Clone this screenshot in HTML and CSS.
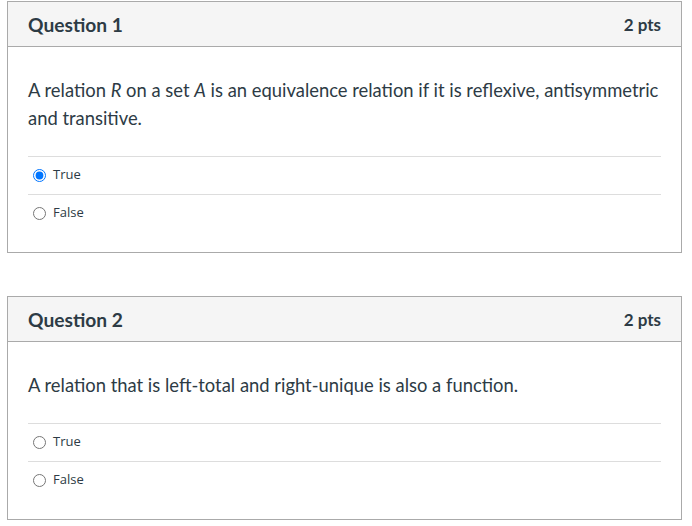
FILE: index.html
```html
<!DOCTYPE html>
<html>
<head>
<meta charset="utf-8">
<link rel="stylesheet" href="styles.css">
</head>
<body>
<div class="quiz">
  <div class="question">
    <div class="header">
      <span class="title">Question 1</span>
      <span class="points">2 pts</span>
    </div>
    <div class="body">
      <div class="text">A relation <i>R</i> on a set <i>A</i> is an equivalence relation if it is reflexive, antisymmetric and transitive.</div>
      <div class="answers">
        <label class="answer"><input type="radio" name="q1" checked><span>True</span></label>
        <label class="answer"><input type="radio" name="q1"><span>False</span></label>
      </div>
    </div>
  </div>
  <div class="question">
    <div class="header">
      <span class="title">Question 2</span>
      <span class="points">2 pts</span>
    </div>
    <div class="body">
      <div class="text">A relation that is left-total and right-unique is also a function.</div>
      <div class="answers">
        <label class="answer"><input type="radio" name="q2"><span>True</span></label>
        <label class="answer"><input type="radio" name="q2"><span>False</span></label>
      </div>
    </div>
  </div>
</div>
</body>
</html>
```
FILE: styles.css
```css
html, body {
  margin: 0;
  padding: 0;
  background: #fff;
}
body {
  font-family: Lato, "Liberation Sans", sans-serif;
  color: #2d3b45;
}
.quiz {
  padding: 1px 10px 0 7px;
  display: flex;
  flex-direction: column;
  gap: 43px;
}
.question {
  border: 1px solid #aaaaaa;
  width: 673px;
}
.header {
  background: #f5f5f5;
  border-bottom: 1px solid #aaaaaa;
  height: 44px;
  display: flex;
  align-items: center;
  justify-content: space-between;
  padding: 0 20px 0 20px;
}
.title {
  font-weight: 700;
  font-size: 19.2px;
}
.points {
  font-weight: 700;
  font-size: 17px;
}
.body {
  padding: 29px 20px 20px 20px;
}
.text {
  font-size: 18.4px;
  line-height: 28px;
  margin-bottom: 24px;
}
.answer {
  display: flex;
  align-items: center;
  height: 36px;
  padding-bottom: 1px;
  box-sizing: content-box;
  border-top: 1px solid #dddddd;
  font-family: "Open Sans", "Noto Sans", sans-serif;
  font-size: 13px;
  color: #2d3b45;
}
.answer span {
  margin-top: -3px;
}
.answer input {
  margin: 0 7px 0 5px;
  width: 13px;
  height: 13px;
}
```
